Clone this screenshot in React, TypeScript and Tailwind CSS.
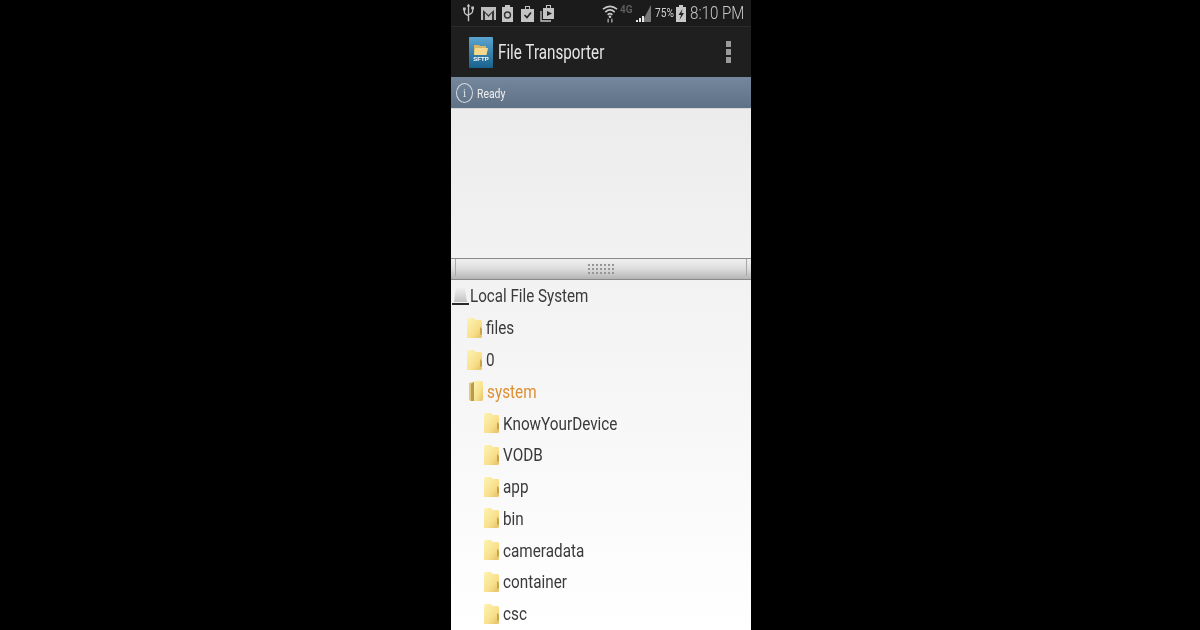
import React from 'react';

const children = ['KnowYourDevice', 'VODB', 'app', 'bin', 'cameradata', 'container', 'csc'];

function Folder({ open = false }: { open?: boolean }) {
  return (
    <svg width="16" height="22" viewBox="0 0 16 22" className="shrink-0">
      <defs>
        <linearGradient id="fold" x1="0" y1="0" x2="1" y2="1">
          <stop offset="0" stopColor="#fdf3b4" />
          <stop offset="0.6" stopColor="#f8e08c" />
          <stop offset="1" stopColor="#e2bf66" />
        </linearGradient>
      </defs>
      {open ? (
        <>
          <path d="M1 3 L9 1 L9 21 L3 21 Q1 21 1 19Z" fill="#e2c878" />
          <path d="M3 4 L6 2 L6 21 L3 21Z" fill="#b89c4e" />
          <path d="M6 1 L13 1 Q15 1 15 3 L15 19 Q15 21 13 21 L6 21Z" fill="url(#fold)" />
        </>
      ) : (
        <>
          <path d="M0 3 Q0 1 2 1 L7 1 L9 3 L14 3 Q15 3 15 5 L15 20 Q15 21 13 21 L1 21 Q0 21 0 20Z" fill="url(#fold)" />
          <path d="M13 10 L15 12 L15 17 L13 18Z" fill="#c9a24a" />
        </>
      )}
    </svg>
  );
}

function TreeRow({ label, indent, open, className }: { label: string; indent: string; open?: boolean; className?: string }) {
  return (
    <div className={`flex h-[31.75px] items-center gap-[3px] ${indent}`}>
      <Folder open={open} />
      <span className={`origin-left scale-x-[0.85] text-[18px] whitespace-nowrap ${className ?? 'text-[#3a3a3a]'}`}>{label}</span>
    </div>
  );
}

function StatusBar() {
  return (
    <div className="flex h-[26px] items-center bg-[#1b1b1b] pr-[7px] pl-[12px] text-[#c4c4c4]">
      <svg width="11" height="20" viewBox="0 0 12 20" className="mr-[7px]" fill="none" stroke="#c4c4c4" strokeWidth="1.5">
        <path d="M6 1 V19 M1.5 6 V9 Q1.5 11 6 13 M10.5 5 V8 Q10.5 10 6 12" />
        <path d="M6 0 L8 3 H4Z M0 4 H3 V7 H0Z M9 3 H12 V6 H9Z" fill="#c4c4c4" stroke="none" />
      </svg>
      <svg width="15" height="13" viewBox="0 0 15 13" className="mr-[6px]">
        <rect width="15" height="13" fill="#bdbdbd" />
        <path d="M2 13 V3 L7.5 8 L13 3 V13 H11 V6 L7.5 10 L4 6 V13Z" fill="#333" />
      </svg>
      <svg width="11" height="18" viewBox="0 0 11 18" className="mr-[8px]">
        <path d="M3 1 H8 V3 H11 V18 H0 V3 H3Z" fill="#c4c4c4" />
        <circle cx="5.5" cy="11" r="3" fill="none" stroke="#333" strokeWidth="1.4" />
      </svg>
      <svg width="13" height="17" viewBox="0 0 13 17" className="mr-[6px]">
        <path d="M0 4 H13 V17 H0Z M4 4 V1 H9 V4 H8 V2 H5 V4Z" fill="#c4c4c4" />
        <path d="M3.5 10 L6 12.5 L10 7.5" fill="none" stroke="#222" strokeWidth="1.6" />
      </svg>
      <svg width="14" height="17" viewBox="0 0 14 17">
        <path d="M3 3 H14 V14 H3Z M6 3 V0 H11 V3 H10 V1 H7 V3Z" fill="#c4c4c4" />
        <path d="M7 6 L12 8.5 L7 11Z" fill="#222" />
        <path d="M1 6 V16 H11" fill="none" stroke="#c4c4c4" strokeWidth="1.3" />
      </svg>
      <svg width="16" height="20" viewBox="0 0 17 20" className="ml-auto" fill="none" stroke="#c8c8c8" strokeWidth="1.7">
        <path d="M1 6 Q8.5 0 16 6 M3.5 9 Q8.5 4.5 13.5 9 M6 12 Q8.5 9.5 11 12" />
        <circle cx="8.5" cy="14" r="1.4" fill="#c8c8c8" stroke="none" />
        <path d="M6.5 16 V20 M10.5 16 V20" strokeWidth="1.2" />
      </svg>
      <span className="mb-[6px] ml-[2px] w-[16px] text-[10px] leading-none font-bold text-[#5c5c5c]">4G</span>
      <svg width="15" height="17" viewBox="0 0 15 17">
        <path d="M15 0 V17 H6Z" fill="#777" />
        <path d="M0 17 V15 H2 V17Z M3 17 V13 H5 V17Z M6 17 V11 H8 V17Z" fill="#e8e8e8" />
      </svg>
      <span className="ml-[4px] w-[21px] origin-left scale-x-[0.85] text-[12px] whitespace-nowrap text-[#d0d0d0]">75%</span>
      <svg width="10" height="17" viewBox="0 0 10 17">
        <path d="M3 0 H7 V2 H10 V17 H0 V2 H3Z" fill="#c8c8c8" />
        <path d="M6.5 4 L2.5 10 H5 L3.5 15 L8 8 H5.5Z" fill="#222" />
      </svg>
      <span className="ml-[4px] w-[54px] origin-left scale-x-[0.84] text-[18px] leading-none font-light whitespace-nowrap text-[#c8c8c8]">8:10 PM</span>
    </div>
  );
}

function AppBar() {
  return (
    <div className="flex h-[51px] items-center border-t border-[#2b2b2b] bg-[#1f1f1f] pr-[20px] pl-[18px]">
      <div className="flex h-[31px] w-[24px] flex-col items-center rounded-[1px] bg-gradient-to-b from-[#5aa5cf] to-[#17628f]">
        <svg width="16" height="12" viewBox="0 0 16 12" className="mt-[6px]">
          <path d="M1 2 H6 L7 3 H13 V11 H1Z" fill="#d9b566" />
          <path d="M2 5 H15 L13.5 12 H1Z" fill="#f6d98c" />
        </svg>
        <span className="font-['Liberation_Sans',sans-serif] text-[6px] leading-[8px] font-bold text-white">SFTP</span>
      </div>
      <span className="mt-[2px] ml-[5px] origin-left scale-x-[0.725] text-[21px] whitespace-nowrap text-[#e6e6e6]">File Transporter</span>
      <div className="ml-auto flex flex-col gap-[2.5px]">
        <div className="h-[5.5px] w-[5px] bg-[#9a9a9a]" />
        <div className="h-[5.5px] w-[5px] bg-[#9a9a9a]" />
        <div className="h-[5.5px] w-[5px] bg-[#9a9a9a]" />
      </div>
    </div>
  );
}

export default function App() {
  return (
    <div className="flex h-[630px] justify-center overflow-hidden bg-black pl-[2px] font-['Roboto',sans-serif]">
      <div className="flex w-[300px] flex-col blur-[0.4px]">
        <StatusBar />
        <AppBar />
        <div className="flex h-[32px] items-center gap-[4px] border-b border-[#d8d8d8] bg-gradient-to-b from-[#75879c] to-[#5f7186] pl-[5px]">
          <div className="flex h-[20px] w-[17px] items-center justify-center rounded-[50%] border border-[#d5dbe2] font-['Liberation_Serif',serif] text-[13px] leading-none text-[#d5dbe2]">i</div>
          <span className="mt-[3px] origin-left scale-x-[0.8] text-[13px] text-[#f0f0f0]">Ready</span>
        </div>
        <div className="h-[149px] bg-gradient-to-b from-[#ececec] to-[#f2f2f2]" />
        <div className="flex h-[22px] items-stretch border-y border-[#8a8a8a] bg-gradient-to-b from-[#f0f0f0] via-[#dcdcdc] to-[#b4b4b4]">
          <div className="mb-[3px] w-[5px] border-r border-[#a8a8a8]" />
          <div className="flex flex-1 items-center justify-center">
            <div className="grid grid-cols-7 gap-x-[2px] gap-y-[2px]">
              {Array.from({ length: 21 }).map((_, i) => (
                <div key={i} className="h-[2px] w-[2px] bg-[#969696]" />
              ))}
            </div>
          </div>
          <div className="mb-[3px] w-[5px] border-l border-[#a8a8a8]" />
        </div>
        <div className="flex-1 bg-gradient-to-b from-[#f2f2f2] to-[#ffffff] pt-[2px]">
          <div className="flex h-[30px] items-center gap-[1px] pl-[1px]">
            <svg width="17" height="20" viewBox="0 0 17 20" className="shrink-0">
              <defs>
                <linearGradient id="drive" x1="0" y1="0" x2="0" y2="1">
                  <stop offset="0" stopColor="#efefef" />
                  <stop offset="1" stopColor="#c4c4c4" />
                </linearGradient>
              </defs>
              <path d="M4 1 H13 L15 15 H2Z" fill="url(#drive)" />
              <path d="M0 16 H17 V18 H0Z" fill="#2a2a2a" />
            </svg>
            <span className="origin-left scale-x-[0.82] text-[18.5px] whitespace-nowrap text-[#3a3a3a]">Local File System</span>
          </div>
          <TreeRow label="files" indent="pl-[16px]" />
          <TreeRow label="0" indent="pl-[16px]" />
          <TreeRow label="system" indent="pl-[17px]" open className="text-[#dd8f33]" />
          {children.map((name) => (
            <TreeRow key={name} label={name} indent="pl-[33px]" />
          ))}
        </div>
      </div>
    </div>
  );
}
